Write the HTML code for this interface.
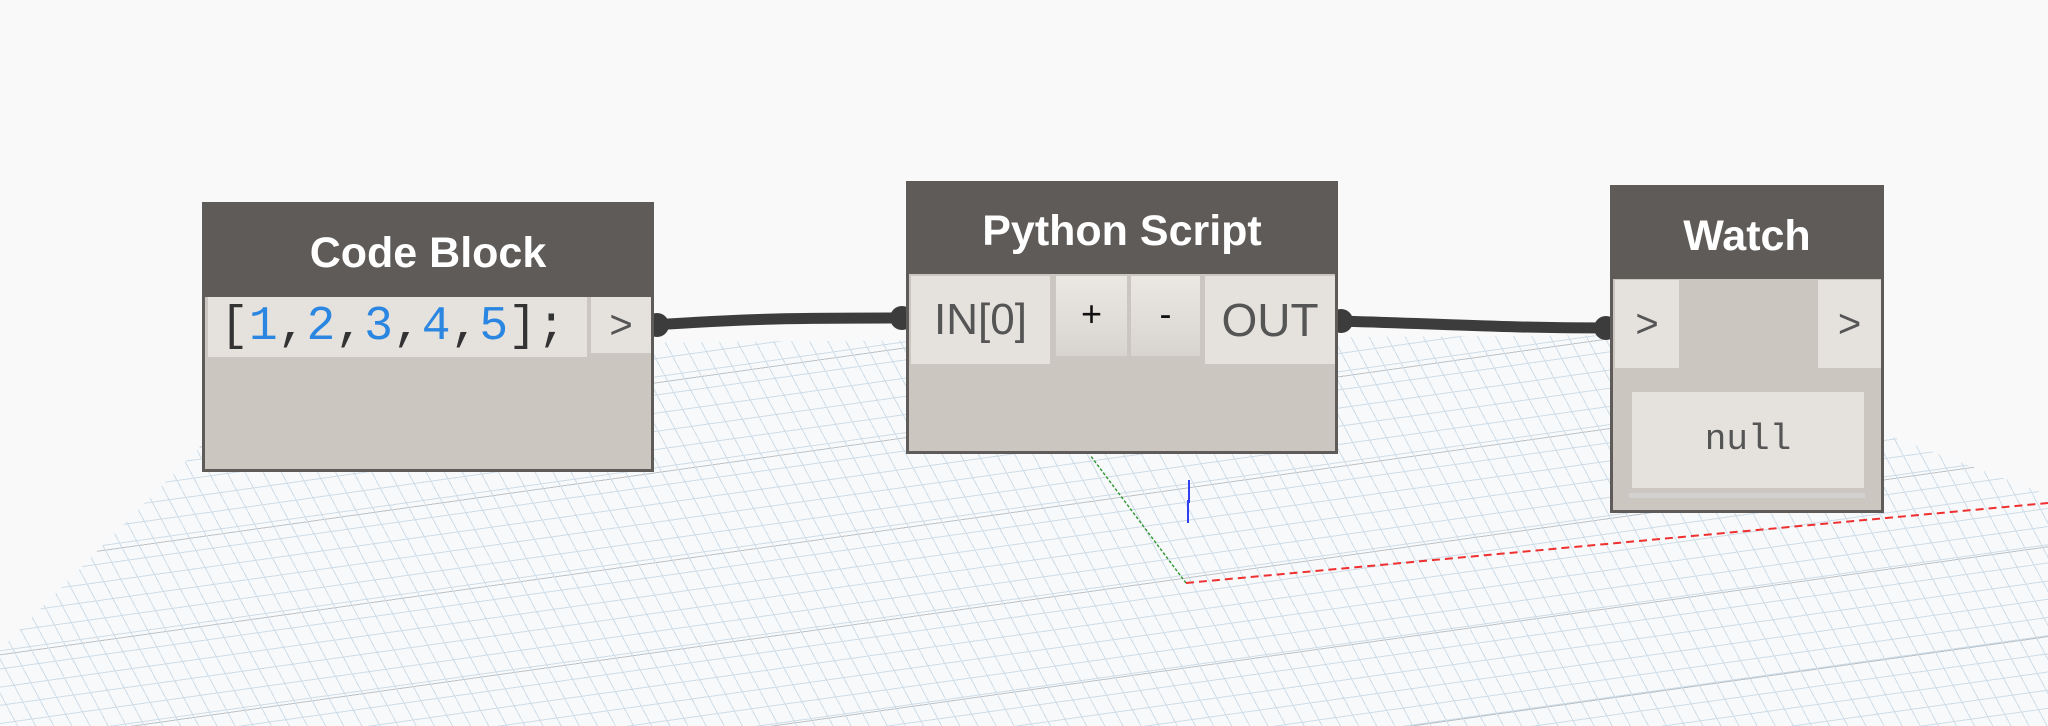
<!DOCTYPE html>
<html><head><meta charset="utf-8"><style>
body{margin:0;width:2048px;height:726px;background:#f9f9f9;position:relative;overflow:hidden;font-family:"Liberation Sans",sans-serif}
.grid{position:absolute;left:0;top:0;width:2048px;height:726px;
clip-path:polygon(0 650px,300px 345px,1620px 335px,2048px 495px,2048px 726px,0 726px);
background:
repeating-linear-gradient(-8deg,transparent 0 17px,#cfdde8 17px 18px),
repeating-linear-gradient(62deg,transparent 0 15px,#d0dde8 15px 16px),
repeating-linear-gradient(-8deg,transparent 0 88px,#bcc3c8 88px 89px),
#f7f9fa}
.node{position:absolute;background:#cbc6bf;border:3px solid #5e5b58;box-sizing:border-box}
.hdr{position:absolute;left:0;right:0;top:0;background:#5e5b58;color:#fff;font-size:43px;font-weight:bold;text-align:center}
.cell{position:absolute;background:#e5e2de;color:#555;font-size:44px;text-align:center;box-sizing:border-box}
.mono{font-family:"Liberation Mono","DejaVu Sans Mono",monospace}
</style></head><body>
<div class="grid"></div>
<svg width="2048" height="726" style="position:absolute;left:0;top:0">
<line x1="1186" y1="583" x2="1090" y2="455" stroke="#3a9a3a" stroke-width="1.5" stroke-dasharray="3 2"/>
<line x1="1186" y1="583" x2="2048" y2="503" stroke="#f03030" stroke-width="2" stroke-dasharray="8 5"/>
<line x1="1188" y1="500" x2="1188" y2="523" stroke="#3040f0" stroke-width="2"/>
<line x1="1189" y1="480" x2="1189" y2="503" stroke="#3040f0" stroke-width="2"/>
<path d="M653 325 C760 318 800 318 906 318" stroke="#3c3c3c" stroke-width="11" fill="none"/>
<path d="M1337 321 C1450 324 1500 328 1610 328" stroke="#3c3c3c" stroke-width="11" fill="none"/>
<circle cx="657" cy="325" r="12" fill="#3c3c3c"/><circle cx="902" cy="318" r="12" fill="#3c3c3c"/>
<circle cx="1341" cy="321" r="12" fill="#3c3c3c"/><circle cx="1606" cy="328" r="12" fill="#3c3c3c"/>
</svg>

<div class="node" style="left:202px;top:202px;width:452px;height:270px">
<div class="hdr" style="height:92px;line-height:96px">Code Block</div>
<div class="cell mono" style="left:3px;top:92px;width:379px;height:60px;line-height:60px;text-align:left;padding-left:12px;font-size:48px;color:#333">[<span style="color:#2a86e0">1</span>,<span style="color:#2a86e0">2</span>,<span style="color:#2a86e0">3</span>,<span style="color:#2a86e0">4</span>,<span style="color:#2a86e0">5</span>];</div>
<div class="cell" style="left:386px;top:92px;width:60px;height:56px;line-height:56px;font-size:40px">&gt;</div>
</div>

<div class="node" style="left:906px;top:181px;width:432px;height:273px">
<div class="hdr" style="height:90px;line-height:94px">Python Script</div>
<div class="cell" style="left:2px;top:92px;width:139px;height:88px;line-height:88px">IN[0]</div>
<div class="cell" style="left:147px;top:92px;width:71px;height:80px;line-height:76px;color:#111;font-size:36px;background:linear-gradient(#ebe8e4,#d8d4cf)">+</div>
<div class="cell" style="left:222px;top:92px;width:69px;height:80px;line-height:76px;color:#111;font-size:36px;background:linear-gradient(#ebe8e4,#d8d4cf)">-</div>
<div class="cell" style="left:296px;top:92px;width:130px;height:88px;line-height:88px;font-size:46px">OUT</div>
</div>

<div class="node" style="left:1610px;top:185px;width:274px;height:328px">
<div class="hdr" style="height:91px;line-height:96px">Watch</div>
<div class="cell" style="left:2px;top:92px;width:64px;height:88px;line-height:88px;font-size:40px">&gt;</div>
<div class="cell" style="left:205px;top:92px;width:63px;height:88px;line-height:88px;font-size:40px">&gt;</div>
<div class="cell mono" style="left:19px;top:204px;width:232px;height:96px;line-height:96px;font-size:36px">null</div>
<div style="position:absolute;left:16px;top:305px;width:236px;height:5px;background:#d4d2d0"></div>
</div>
</body></html>
